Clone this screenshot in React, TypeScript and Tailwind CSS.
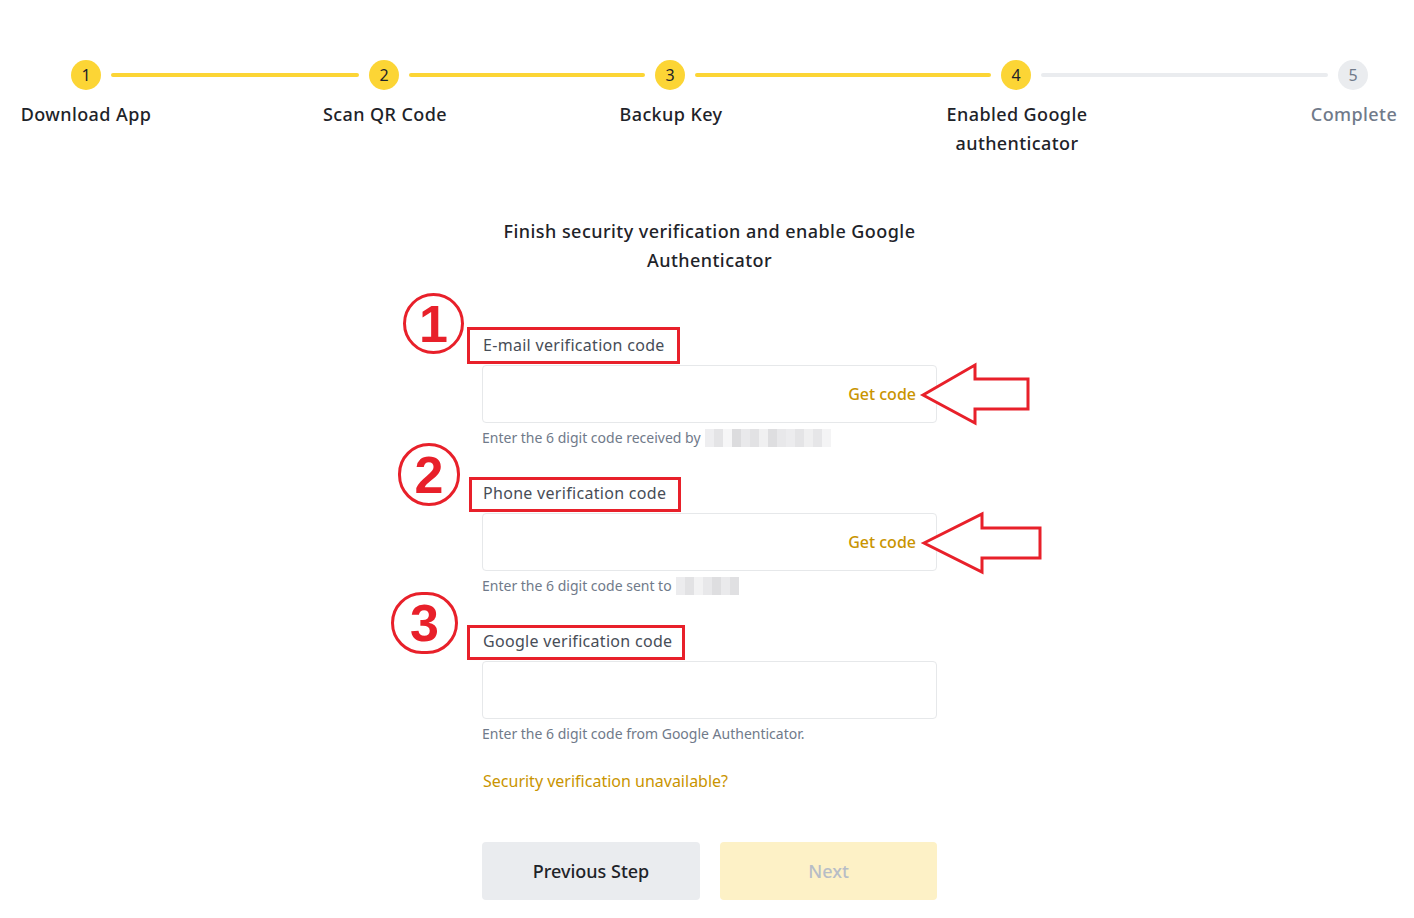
import React from 'react';

const FONT = { fontFamily: '"Noto Sans", Roboto, Arial, sans-serif' };

interface Step {
  n: number;
  label: React.ReactNode;
  done: boolean;
}

const steps: Step[] = [
  { n: 1, label: 'Download App', done: true },
  { n: 2, label: 'Scan QR Code', done: true },
  { n: 3, label: 'Backup Key', done: true },
  { n: 4, label: <>Enabled Google<br />authenticator</>, done: true },
  { n: 5, label: 'Complete', done: false },
];

// line widths between circles, in px
const lineClasses = ['w-[248px]', 'w-[236px]', 'w-[296px]', 'w-[287px]'];
const lineColors = ['bg-[#FCD535]', 'bg-[#FCD535]', 'bg-[#FCD535]', 'bg-[#EAECEF]'];
const labelOffsets = ['ml-[6px]', 'ml-[139px]', 'ml-[126px]', 'ml-[186px]', 'ml-[177px]'];

function Circle({ n, done }: { n: number; done: boolean }) {
  return (
    <div
      className={`w-[30px] h-[30px] rounded-full flex items-center justify-center text-[16px] shrink-0 ${
        done ? 'bg-[#FCD535] text-[#1E2329]' : 'bg-[#EAECEF] text-[#707A8A]'
      }`}
    >
      {n}
    </div>
  );
}

function Stepper() {
  return (
    <div className="pt-[60px]">
      <div className="flex items-center pl-[71px]">
        {steps.map((s, i) => (
          <React.Fragment key={s.n}>
            <Circle n={s.n} done={s.done} />
            {i < lineClasses.length && (
              <div className={`h-[4px] mx-[10px] rounded-full ${lineClasses[i]} ${lineColors[i]}`} />
            )}
          </React.Fragment>
        ))}
      </div>
      <div className="flex mt-[10px]">
        {steps.map((s, i) => (
          <div
            key={s.n}
            className={`w-[160px] shrink-0 text-center text-[18px] leading-[29px] font-medium tracking-[0.4px] ${labelOffsets[i]} ${
              s.done ? 'text-[#1E2329]' : 'text-[#707A8A]'
            }`}
          >
            {s.label}
          </div>
        ))}
      </div>
    </div>
  );
}

function Blur({ shades }: { shades: string[] }) {
  return (
    <span className="inline-flex h-[18px] align-middle ml-[4px]">
      {shades.map((c, i) => (
        <span key={i} className={`w-[9px] h-[18px] ${c}`} />
      ))}
    </span>
  );
}

function Field({
  label,
  boxClass,
  getCode,
  helper,
}: {
  label: string;
  boxClass: string;
  getCode?: boolean;
  helper: React.ReactNode;
}) {
  return (
    <div>
      <div className="relative">
        <div className="text-[16px] leading-[24px] tracking-[0.3px] text-[#474D57] pl-px">{label}</div>
        <div className={`absolute border-[3px] border-[#E8202A] ${boxClass}`} />
      </div>
      <div className="mt-[8px] h-[58px] rounded-[4px] border border-[#E6E8EA] flex items-center justify-end pr-[20px]">
        {getCode && <span className="text-[16px] font-medium text-[#C99400]">Get code</span>}
      </div>
      <div className="mt-[5px] text-[14px] leading-[20px] text-[#707A8A] flex items-center">{helper}</div>
    </div>
  );
}

function NumberBadge({ n, className }: { n: number; className: string }) {
  return (
    <div
      className={`absolute rounded-full border-[3px] border-[#E8202A] flex items-center justify-center text-[#E8202A] font-bold text-[52px] leading-none ${className}`}
      style={{ fontFamily: 'Arial, "Liberation Sans", sans-serif' }}
    >
      {n}
    </div>
  );
}

function Arrow({ points, className }: { points: string; className: string }) {
  return (
    <svg className={`absolute ${className}`} width="130" height="70" viewBox="0 0 130 70">
      <polygon points={points} fill="white" stroke="#E8202A" strokeWidth="3" strokeLinejoin="miter" />
    </svg>
  );
}

export default function App() {
  return (
    <div className="relative w-full min-h-[918px] bg-white overflow-hidden" style={FONT}>
      <Stepper />

      <div className="flex justify-center pl-[5px]">
        <div className="w-[455px]">
          <h2 className="mt-[59px] text-center text-[18px] leading-[29px] font-medium tracking-[0.45px] text-[#1E2329]">
            Finish security verification and enable Google
            <br />
            Authenticator
          </h2>

          <div className="mt-[58px] flex flex-col gap-[33px]">
            <Field
              label="E-mail verification code"
              boxClass="left-[-15px] top-[-6px] w-[213px] h-[37px]"
              getCode
              helper={
                <>
                  Enter the 6 digit code received by
                  <Blur
                    shades={[
                      'bg-[#EEEEF0]', 'bg-[#E4E4E6]', 'bg-[#F6F6F7]', 'bg-[#DCDCDE]', 'bg-[#E9E9EB]',
                      'bg-[#E2E2E4]', 'bg-[#F0F0F1]', 'bg-[#DEDEE0]', 'bg-[#E8E8EA]', 'bg-[#ECECEE]',
                      'bg-[#E4E4E6]', 'bg-[#EFEFF0]', 'bg-[#E6E6E8]', 'bg-[#F4F4F5]',
                    ]}
                  />
                </>
              }
            />
            <Field
              label="Phone verification code"
              boxClass="left-[-13px] top-[-4px] w-[212px] h-[35px]"
              getCode
              helper={
                <>
                  Enter the 6 digit code sent to
                  <Blur
                    shades={[
                      'bg-[#ECECEE]', 'bg-[#E2E2E4]', 'bg-[#F2F2F3]', 'bg-[#E8E8EA]',
                      'bg-[#DEDEE0]', 'bg-[#EAEAEC]', 'bg-[#E0E0E2]',
                    ]}
                  />
                </>
              }
            />
            <Field
              label="Google verification code"
              boxClass="left-[-15px] top-[-4px] w-[218px] h-[35px]"
              helper="Enter the 6 digit code from Google Authenticator."
            />
          </div>

          <div className="mt-[25px] text-[16px] leading-[24px] text-[#C99400] pl-px">
            Security verification unavailable?
          </div>

          <div className="mt-[49px] flex gap-[20px]">
            <button className="w-[218px] h-[58px] rounded-[4px] bg-[#EAECEF] text-[18px] font-medium text-[#1E2329]">
              Previous Step
            </button>
            <button className="w-[217px] h-[58px] rounded-[4px] bg-[#FDF1C6] text-[18px] font-medium text-[#B7BDC6]">
              Next
            </button>
          </div>
        </div>
      </div>

      {/* annotations drawn over the form */}
      <NumberBadge n={1} className="left-[403px] top-[293px] w-[61px] h-[61px]" />
      <NumberBadge n={2} className="left-[398px] top-[443px] w-[62px] h-[63px]" />
      <NumberBadge n={3} className="left-[391px] top-[592px] w-[67px] h-[62px]" />

      <Arrow
        className="left-[910px] top-[360px]"
        points="13,35 65,5 65,19 118,19 118,49 65,49 65,63"
      />
      <Arrow
        className="left-[912px] top-[508px]"
        points="12,35 70,6 70,20 128,20 128,50 70,50 70,64"
      />
    </div>
  );
}
